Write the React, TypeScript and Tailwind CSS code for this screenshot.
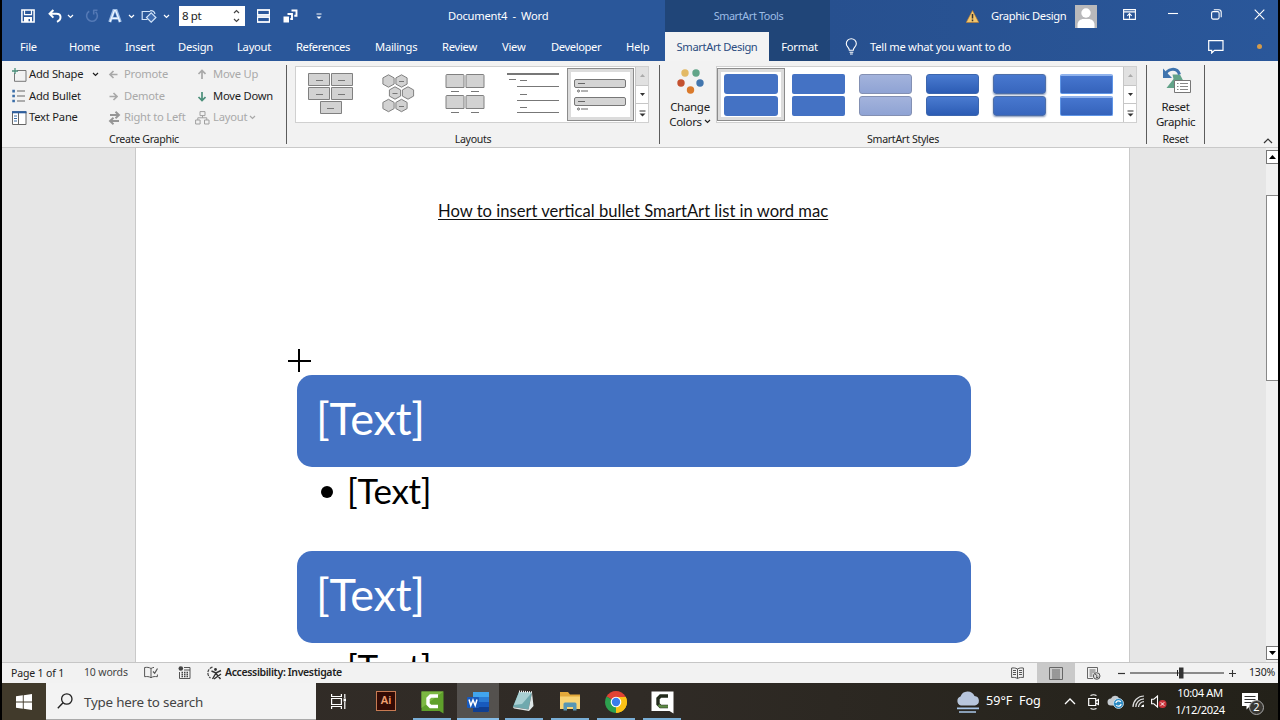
import React from "react";

type IconProps = { w: number; h: number; className?: string; children: React.ReactNode };

function Icon({ w, h, className = "", children }: IconProps) {
  return (
    <svg width={w} height={h} viewBox={`0 0 ${w} ${h}`} fill="none" className={`block shrink-0 ${className}`}>
      {children}
    </svg>
  );
}

function Chevron({ className = "" }: { className?: string }) {
  return (
    <Icon w={7} h={5} className={className}>
      <path d="M1 1l2.5 2.5L6 1" stroke="currentColor" strokeWidth="1.2" />
    </Icon>
  );
}

/* ---------- Title bar ---------- */

function QuickAccess() {
  return (
    <div className="flex h-[32px] items-center pl-[19px] text-white">
      <div className="w-[27px]">
        <Icon w={14} h={14}>
          <path d="M.9.9h12.200v12.200H.9z" stroke="#fff" strokeWidth="1.500" />
          <path d="M3.500 1v4.700h7V1" stroke="#fff" strokeWidth="1.200" />
          <path d="M3 8h8v5H9V10H7.500v3H3z" fill="#fff" />
        </Icon>
      </div>
      <div className="w-[19px]">
        <Icon w={14} h={14}>
          <path d="M5.400 1L1.600 4.800l3.800 3.800M2 4.800h6.500c5 0 5.500 5.700.5 8" stroke="#fff" strokeWidth="2" />
        </Icon>
      </div>
      <div className="w-[18px]"><Chevron /></div>
      <div className="w-[23px]">
        <Icon w={14} h={14}>
          <path d="M4.200 2.200a5.400 5.400 0 1 0 6.400.6M8.300 1.200h4.200M8.700 1v4.500" stroke="#5479b5" strokeWidth="1.600" />
        </Icon>
      </div>
      <div className="w-[20px]">
        <Icon w={14} h={14}>
          <path d="M1.800 13L6 1.200h2L12.200 13" stroke="#9cbce6" strokeWidth="3.200" strokeLinejoin="round" />
          <path d="M4 9.300h6" stroke="#9cbce6" strokeWidth="2.600" />
          <path d="M2 13L6.300 1.600h1.400L12 13M4.200 9.300h5.600" stroke="#f0f7ff" strokeWidth="1.200" />
        </Icon>
      </div>
      <div className="w-[13px]"><Chevron /></div>
      <div className="w-[22px]">
        <Icon w={17} h={14}>
          <path d="M6.500 10.500H1.200V2.500h8M9 1.800a4.500 4.500 0 0 1 5 3.200" stroke="#cfe2f8" strokeWidth="1.200" />
          <path d="M10.200 3.800l4.700 4.700-4.700 4.700-4.700-4.700z" stroke="#cfe2f8" strokeWidth="1.200" fill="#3f6cb0" />
        </Icon>
      </div>
      <div className="w-[16px]"><Chevron /></div>
      <div className="mt-[-1px] flex h-[20px] w-[66px] items-center justify-between bg-white pl-[3px] pr-[5px] text-[11.5px] tracking-[-0.4px] text-[#222]">
        <span>8 pt</span>
        <Icon w={7} h={14}>
          <path d="M1 4l2.500-2.500L6 4M1 10l2.500 2.500L6 10" stroke="#444" strokeWidth="1.200" />
        </Icon>
      </div>
      <div className="w-[26px] pl-[12px]">
        <Icon w={13} h={14}>
          <path d="M.6 1h11.800v4.800H.6zM.6 8.200h11.800V13H.6z" stroke="#fff" strokeWidth="1.200" />
          <path d="M0 1h13M0 6h13M0 8h13M0 13h13" stroke="#fff" strokeWidth="1.400" />
        </Icon>
      </div>
      <div className="w-[44px] pl-[12px]">
        <Icon w={15} h={14}>
          <path d="M.5 7.500H6v6H.5z" fill="#fff" />
          <path d="M4.500 5H9v5H7.300" stroke="#fff" strokeWidth="1.900" />
          <path d="M8.500 1.500h5v5.300h-2.200" stroke="#fff" strokeWidth="1.900" />
        </Icon>
      </div>
      <Icon w={6} h={8} className="ml-[1px]">
        <path d="M.5 2h5" stroke="#fff" />
        <path d="M.5 4.500h5L3 7z" fill="#fff" />
      </Icon>
      <span className="ml-[126px] mt-px whitespace-pre text-[11.2px] tracking-[-0.25px]">Document4  -  Word</span>
    </div>
  );
}

function Tab({ children, className }: { children: React.ReactNode; className: string }) {
  return <div className={`shrink-0 whitespace-nowrap ${className}`}>{children}</div>;
}

function Header() {
  return (
    <header className="flex h-[61px] bg-[#2a579a] text-[11.2px] tracking-[-0.25px] text-white">
      <div className="w-[663px] shrink-0">
        <QuickAccess />
        <nav className="flex h-[29px] items-center pl-[18px] pt-[2px]">
          <Tab className="w-[49px]">File</Tab>
          <Tab className="w-[56px]">Home</Tab>
          <Tab className="w-[53px]">Insert</Tab>
          <Tab className="w-[59px]">Design</Tab>
          <Tab className="w-[59px]">Layout</Tab>
          <Tab className="w-[79px] tracking-[-0.42px]">References</Tab>
          <Tab className="w-[67px]">Mailings</Tab>
          <Tab className="w-[60px]">Review</Tab>
          <Tab className="w-[49px]">View</Tab>
          <Tab className="w-[75px] tracking-[-0.4px]">Developer</Tab>
          <Tab className="w-[30px]">Help</Tab>
        </nav>
      </div>
      <div className="w-[165px] shrink-0 bg-[#204578]">
        <div className="flex h-[32px] items-center justify-center pl-[2px] text-[10.8px] tracking-[-0.36px] text-[#9dbde6]">SmartArt Tools</div>
        <div className="flex h-[29px]">
          <div className="flex w-[104px] items-center justify-center whitespace-nowrap bg-[#f3f3f3] pt-[2px] tracking-[-0.4px] text-[#2b4c80]">SmartArt Design</div>
          <div className="flex w-[61px] items-center justify-center pt-[2px]">Format</div>
        </div>
      </div>
      <div className="flex-1 bg-linear-to-r from-[#27508f] to-[#2a579a]">
        <div className="flex h-[32px] items-center pl-[136px]">
          <Icon w={13} h={13}>
            <path d="M6.500.5L12.800 12.500H.2z" fill="#f3c66c" stroke="#b97b2b" strokeWidth=".6" />
            <path d="M6.500 4v4.500M6.500 9.500v1.700" stroke="#333" strokeWidth="1.500" />
          </Icon>
          <span className="ml-[12px] mt-px w-[84px] whitespace-nowrap tracking-[-0.36px]">Graphic Design</span>
          <Icon w={22} h={23}>
            <path d="M0 0h22v23H0z" fill="#b9b9bb" />
            <circle cx="11" cy="8" r="4.700" fill="#fff" />
            <path d="M2.500 23v-3c0-4 3-6 6-6h5c3 0 6 2 6 6v3z" fill="#fff" />
          </Icon>
          <Icon w={13} h={11} className="ml-[26px] mt-[-3px]">
            <path d="M.6.600h11.800v9.800H.6zM.6 2.900h11.800M6.500 9.500V5M4.300 6.800l2.200-2.200 2.200 2.200" stroke="#fff" strokeWidth="1.100" />
          </Icon>
          <Icon w={10} h={3} className="ml-[32px] mt-[-5px]"><path d="M0 1.500h10" stroke="#fff" strokeWidth="1.100" /></Icon>
          <Icon w={11} h={11} className="ml-[33px] mt-[-3px]">
            <rect x=".6" y="2.600" width="7.500" height="7.500" rx="1.500" stroke="#fff" strokeWidth="1.100" />
            <path d="M2.800.8h5c1.600 0 2.400.9 2.400 2.400v5" stroke="#fff" strokeWidth="1.100" />
          </Icon>
          <Icon w={11} h={11} className="ml-[32px] mt-[-3px]"><path d="M.7.700l9.600 9.600M10.300.700L.7 10.300" stroke="#fff" strokeWidth="1.100" /></Icon>
        </div>
        <div className="flex h-[29px] items-center pl-[15px]">
          <Icon w={13} h={17}>
            <path d="M4.300 12.300C4.300 9.500 1.300 8.800 1.300 5.700a5 5 0 0 1 10 0c0 3.100-3 3.800-3 6.600zM4.500 14.200h3.800M5 16h2.800" stroke="#fff" strokeWidth="1.100" />
          </Icon>
          <span className="ml-[12px] mt-[2px] w-[338px] whitespace-nowrap">Tell me what you want to do</span>
          <Icon w={16} h={14}>
            <path d="M.7.700h14.300v9.600H6.500L3.700 13v-2.700h-3z" stroke="#fff" strokeWidth="1.200" />
          </Icon>
          <span className="ml-[33px] h-[5px] w-[5px] rounded-full bg-[#d39a4a]" />
        </div>
      </div>
    </header>
  );
}

/* ---------- Ribbon ---------- */

function Divider() {
  return <div className="mt-[4px] h-[79px] w-px shrink-0 bg-[#5c5c5c]" />;
}

function GroupLabel({ children }: { children: React.ReactNode }) {
  return <div className="flex h-[14px] items-center justify-center whitespace-nowrap text-[10.6px] tracking-[-0.3px] text-[#222]">{children}</div>;
}

function Arrow({ d, color }: { d: string; color: string }) {
  return (
    <Icon w={11} h={11}>
      <path d={d} stroke={color} strokeWidth="1.700" />
    </Icon>
  );
}

type CommandProps = { icon: React.ReactNode; label: string; off?: boolean; more?: boolean; moreClass?: string; slot?: string };

function Command({ icon, label, off, more, moreClass = "", slot = "w-[17px]" }: CommandProps) {
  return (
    <div className={`flex items-center whitespace-nowrap ${off ? "text-[#a9a9a9]" : "text-[#1e1e1e]"}`}>
      <span className={`flex shrink-0 ${slot}`}>{icon}</span>
      {label}
      {more && <Chevron className={moreClass} />}
    </div>
  );
}

function CreateGraphic() {
  return (
    <div className="flex w-[284px] shrink-0 flex-col justify-between pt-[3px]">
      <div className="grid grid-cols-[95px_88px_1fr] grid-rows-[21.5px_21.5px_21.5px] pl-[10px] text-[11.2px] tracking-[-0.22px]">
        <Command label="Add Shape" more moreClass="ml-[9px]" icon={
          <Icon w={15} h={14}>
            <path d="M5 2.500h9v10.800H2.500V5" stroke="#777" /><path d="M3 0v6M0 3h6" stroke="#4b8f7a" strokeWidth="1.300" />
          </Icon>} />
        <Command off label="Promote" icon={<Arrow color="#a9a9a9" d="M10.500 5.500H3M6.500 2L3 5.500 6.500 9" />} />
        <Command off label="Move Up" slot="w-[18px]" icon={<Arrow color="#a9a9a9" d="M7 10V1.500M3.500 5L7 1.500 10.500 5" />} />
        <Command label="Add Bullet" icon={
          <Icon w={15} h={14}>
            <path d="M5 2h8M5 7h8M5 12h8" stroke="#666" strokeWidth="1.100" />
            <path d="M.3.800h2.600v2.600H.3zM.3 5.700h2.600v2.600H.3zM.3 10.700h2.600v2.600H.3z" fill="#3b6ea8" />
          </Icon>} />
        <Command off label="Demote" icon={<Arrow color="#a9a9a9" d="M2.500 5.500H10M6.500 2L10 5.500 6.500 9" />} />
        <Command label="Move Down" slot="w-[18px]" icon={<Arrow color="#4b8f7a" d="M7 1v8.500M3.500 6L7 9.500 10.500 6" />} />
        <Command label="Text Pane" icon={
          <Icon w={15} h={14}>
            <path d="M.5 1h13.500v12.500H.5zM6.500 2v11.500" stroke="#666" fill="#fff" /><path d="M0 1.200h14.500" stroke="#2f5f9e" strokeWidth="2.200" />
            <path d="M2 5h3M2 7.500h3M2 10h3" stroke="#3b6ea8" />
          </Icon>} />
        <Command off label="Right to Left" icon={
          <Icon w={15} h={14}>
            <path d="M3 4h9M8.500.800L12 4 8.500 7.200M12 10H3M6.500 6.800L3 10l3.500 3.200" stroke="#969696" strokeWidth="1.900" />
          </Icon>} />
        <Command off label="Layout" more moreClass="ml-[2px]" slot="w-[18px]" icon={
          <Icon w={15} h={14}>
            <path d="M5 .6h5v4H5zM.6 9h4.500v4H.6zM9.500 9H14v4H9.500zM7.500 4.600v2.200M2.800 9V6.800h9V9" stroke="#a0a0a0" />
          </Icon>} />
      </div>
      <GroupLabel>Create Graphic</GroupLabel>
    </div>
  );
}

function GalleryButtons() {
  return (
    <div className="flex w-[13px] shrink-0 flex-col border-l border-[#c6c6c6]">
      <div className="flex flex-1 items-center justify-center border-b border-[#c6c6c6] bg-[#e1e1e1]">
        <Icon w={5} h={3}><path d="M0 3h5L2.500 0z" fill="#aaa" /></Icon>
      </div>
      <div className="flex flex-1 items-center justify-center border-b border-[#c6c6c6]">
        <Icon w={5} h={3}><path d="M0 0h5L2.500 3z" fill="#333" /></Icon>
      </div>
      <div className="flex flex-1 items-center justify-center">
        <Icon w={7} h={7}><path d="M.5 1h6" stroke="#333" /><path d="M.5 3.500h6l-3 3z" fill="#333" /></Icon>
      </div>
    </div>
  );
}

const hexagons = [[99, 82, 0], [112, 82, 1], [105.5, 94, 1], [118.5, 94, 0], [99, 106.5, 0], [112, 106.5, 1]];

function Layouts() {
  return (
    <div className="flex w-[372px] shrink-0 flex-col justify-between pt-[5px]">
      <div className="ml-[8px] flex h-[57px] w-[354px] border border-[#d0d0d0] bg-white">
        <Icon w={272} h={55}>
          <g fill="#d2d2d2" stroke="#808080">
            <path d="M12.500 6.500h21v12h-21zM35.500 6.500h21v12h-21zM12.500 20.500h21v12h-21zM35.500 20.500h21v12h-21zM24.500 34.500h21v12h-21z" />
            {hexagons.map(([x, y], i) => (
              <path key={i} transform={`translate(${x - 6.5} ${y - 68})`} d="M0-6.200l5.600 3.100v6.200L0 6.200l-5.600-3.100v-6.200z" />
            ))}
            <path d="M151 7.500h16q1 0 1 1v12h-18v-12q0-1 1-1zM171 7.500h16q1 0 1 1v12h-18v-12q0-1 1-1zM151 28.500h16q1 0 1 1v12h-18v-12q0-1 1-1zM171 28.500h16q1 0 1 1v12h-18v-12q0-1 1-1z" />
          </g>
          <g stroke="#777">
            <path d="M20 13.500h7M42 13.500h7M20 27.500h7M42 27.500h7M31 41.500h7" />
            <path d="M103 14.500h5M96.500 26.500h5M103 39.500h5" />
            <path d="M155 24.500h8M175 24.500h8M155 45.500h8M175 45.500h8" />
            <path d="M213 12.500h7M224 13.500h7M221 19.500h42M224 27.500h7M221 33.500h42M224 40.500h7M221 45.500h42" />
            <path d="M211 7h52" strokeWidth="2" />
          </g>
        </Icon>
        <div className="my-px ml-[-1px] w-[67px] border border-[#8c8c8c] bg-[#dcdcdc] p-[3px]">
          <div className="h-full bg-white">
            <Icon w={59} h={47}>
              <g fill="#d4d4d4" stroke="#777">
                <rect x="3.500" y="7.500" width="51" height="8" rx="1.500" />
                <rect x="3.500" y="25.500" width="51" height="8" rx="1.500" />
              </g>
              <path d="M7 11.500h7M7 29.500h7M10 19h7M10 37h7" stroke="#666" />
              <circle cx="7.500" cy="19" r="1" stroke="#666" /><circle cx="7.500" cy="37" r="1" stroke="#666" />
            </Icon>
          </div>
        </div>
        <div className="ml-auto flex"><GalleryButtons /></div>
      </div>
      <GroupLabel>Layouts</GroupLabel>
    </div>
  );
}

const styleFills = [
  "bg-[#4472c4] rounded-[3px]",
  "bg-[#4472c4] rounded-[2px]",
  "bg-linear-to-b from-[#a3b3dc] to-[#8fa3d4] rounded-[3px] border border-[#8390b3]",
  "bg-linear-to-b from-[#4a7bd0] to-[#2c5cb4] rounded-[3px] border border-[#3c66ae]",
  "bg-linear-to-b from-[#4878cf] to-[#3866bd] rounded-[3px] border border-[#4d6ea8] shadow-[0_1px_2px_#8294b8]",
  "bg-linear-to-b from-[#4676cf] to-[#3563bb] rounded-[2px] border border-[#5f95e6] border-t-2 border-t-[#8fb2ec]",
];

function Styles() {
  return (
    <div className="flex w-[486px] shrink-0 flex-col justify-between pt-[5px] text-[#222]">
      <div className="flex">
        <div className="flex w-[56px] flex-col items-center pl-[4px] text-center text-[11.5px] leading-[15px] tracking-[-0.3px]">
          <Icon w={28} h={26} className="mt-[2px]">
            <circle cx="9" cy="5" r="3.700" fill="#e3b964" />
            <circle cx="20" cy="5" r="3.700" fill="#62a589" />
            <circle cx="5" cy="15" r="3.700" fill="#c4512f" />
            <circle cx="24" cy="15" r="3.700" fill="#4276ae" />
            <circle cx="14.500" cy="22" r="3.700" fill="#da7a2b" />
          </Icon>
          <span className="mt-[5px]">Change</span>
          <span className="flex items-center gap-[2px]">Colors <Chevron /></span>
        </div>
        <div className="flex h-[57px] w-[421px] border border-[#d0d0d0] bg-white">
          {styleFills.map((fill, i) => (
            <div key={i} className={`my-px h-[53px] shrink-0 ${i === 0 ? "w-[68px] border border-[#8c8c8c] bg-[#dcdcdc] p-[3px]" : "w-[67px] border border-transparent p-[3px]"}`}>
              <div className="flex h-full flex-col gap-[2px] bg-white px-[3px] pb-[1px] pt-[2px]">
                <div className={`flex-1 ${fill}`} />
                <div className={`flex-1 ${fill}`} />
              </div>
            </div>
          ))}
          <div className="ml-auto flex"><GalleryButtons /></div>
        </div>
      </div>
      <GroupLabel>SmartArt Styles</GroupLabel>
    </div>
  );
}

function Ribbon() {
  return (
    <section className="flex h-[87px] border-b border-[#c9c9c9] bg-[#f2f2f2]">
      <CreateGraphic />
      <Divider />
      <Layouts />
      <Divider />
      <Styles />
      <Divider />
      <div className="flex w-[57px] shrink-0 flex-col items-center justify-between pt-[5px] text-[#222]">
        <div className="flex flex-col items-center text-[11.5px] leading-[15px] tracking-[-0.4px]">
          <Icon w={30} h={28}>
            <path d="M11.500 8.500h7.500l7 13.500H5.500l3.500-4.500L12.500 13z" fill="#63a389" />
            <path d="M4 9.500C6 2.500 16 .5 18.500 8.500" stroke="#3f74ae" strokeWidth="3" />
            <path d="M2 2.500v9.500h9z" fill="#3f74ae" />
            <path d="M13.500 14.500h16v12h-16z" fill="#fff" stroke="#777" />
            <path d="M16 17.500h1.500M19 17.500h8M16 20.500h1.500M19 20.500h8M16 23.500h1.500M19 23.500h8" stroke="#888" />
          </Icon>
          <span className="mt-[5px]">Reset</span>
          <span>Graphic</span>
        </div>
        <GroupLabel>Reset</GroupLabel>
      </div>
      <Divider />
      <div className="flex flex-1 items-end justify-end pb-[3px] pr-[5px]">
        <Icon w={10} h={6}><path d="M1 5l4-4 4 4" stroke="#333" strokeWidth="1.200" /></Icon>
      </div>
    </section>
  );
}

/* ---------- Document ---------- */

function Block() {
  return (
    <div className="h-[176px]">
      <div className="flex h-[92px] w-[674px] items-center rounded-[15px] bg-[#4472c4] pb-[4px] pl-[19px] text-[45px] tracking-[-0.3px] text-white">[Text]</div>
      <div className="flex h-[50px] items-center pl-[24px] text-[35px] tracking-[-0.3px] text-black">
        <span className="mr-[14px] h-[12px] w-[12px] rounded-full bg-black" />
        <span className="mt-[-4px]">[Text]</span>
      </div>
    </div>
  );
}

function Document() {
  return (
    <main className="flex h-[514px] overflow-hidden bg-[#e6e6e6]">
      <div className="relative ml-[133px] w-[995px] shrink-0 border-x border-[#c9c9c9] bg-white font-['Lato','Liberation_Sans',sans-serif]">
        <h1 className="mt-[52px] pl-[302px] text-[16.6px] leading-[22px] text-[#111] underline decoration-1 underline-offset-2">How to insert vertical bullet SmartArt list in word mac</h1>
        <div className="mt-[153px] pl-[161px]">
          <Block />
          <Block />
        </div>
        <Icon w={23} h={23} className="absolute left-[152px] top-[201px]">
          <path d="M0 12h23M11 0v23" stroke="#000" strokeWidth="2" />
        </Icon>
      </div>
      <div className="ml-auto flex w-[12px] flex-col bg-[#f0f0f0]">
        <div className="mt-[2px] flex h-[14px] items-center justify-center border border-r-0 border-[#777] bg-white">
          <Icon w={7} h={4}><path d="M0 4h7L3.500 0z" fill="#000" /></Icon>
        </div>
        <div className="mt-[31px] h-[186px] border border-r-0 border-[#888] bg-white" />
        <div className="mb-[2px] mt-auto flex h-[14px] items-center justify-center border border-r-0 border-[#777] bg-white">
          <Icon w={7} h={4}><path d="M0 0h7L3.500 4z" fill="#000" /></Icon>
        </div>
      </div>
    </main>
  );
}

/* ---------- Status bar ---------- */

function StatusBar() {
  return (
    <footer className="flex h-[21px] items-center whitespace-nowrap border-t border-[#c6c6c6] bg-[#f2f2f2] text-[10.5px] tracking-[-0.15px] text-[#222]">
      <span className="ml-[9px] mt-px w-[73px]">Page 1 of 1</span>
      <span className="w-[60px] text-[#444]">10 words</span>
      <Icon w={14} h={13} className="mt-[-2px]">
        <path d="M7 2.500C5 1.200 3 1.200.6 1.500v9.200c2.400-.3 4.400-.3 6.400 1V2.500c1-.7 2-1 3-1.100M7 11.700c2-1.300 4-1.300 6.400-1V8.500" stroke="#555" />
        <path d="M9 5.500l1.700 1.700L13.500 2.500" stroke="#555" strokeWidth="1.200" />
      </Icon>
      <Icon w={13} h={13} className="ml-[20px] mt-[-1px]">
        <circle cx="2.800" cy="2.500" r="2.300" fill="#444" />
        <path d="M6 1.500h6v11H1.500V6M6 4h6" stroke="#555" />
        <path d="M3.500 6.500h7M3.500 8.500h7M3.500 10.500h7" stroke="#444" strokeDasharray="1.500 1" strokeWidth="1.300" />
      </Icon>
      <Icon w={15} h={14} className="ml-[16px]">
        <path d="M5.500 1.200A6 6 0 0 0 3.500 12" stroke="#444" strokeDasharray="3 1" strokeWidth="1.200" />
        <path d="M4.500 5l4.500 2 5-2.500M9 7l-3.500 6M9 7.500l4.500 5.500M7 13l7-5" stroke="#333" strokeWidth="1.400" />
        <circle cx="8.500" cy="3.500" r="1.400" fill="#333" />
      </Icon>
      <span className="ml-[3px] font-semibold tracking-[-0.36px]">Accessibility: Investigate</span>
      <div className="ml-auto flex h-full items-center">
        <Icon w={13} h={12}>
          <path d="M6.500 2C4.500.8 2.500.8.6 1v9.500c2-.3 4-.2 5.900 1 1.900-1.200 3.900-1.300 5.900-1V1c-2-.2-4-.2-5.900 1zv9.500" stroke="#555" />
          <path d="M2 3.500h3M2 5.500h3M2 7.500h3M8 3.500h3M8 5.500h3M8 7.500h3" stroke="#555" />
        </Icon>
        <div className="ml-[13px] flex h-full w-[38px] items-center justify-center bg-[#c9c9c9]">
          <Icon w={14} h={13}>
            <path d="M.5.500h13v12H.5zM3 3h8M3 5h8M3 7h8M3 9h8M3 11h8" stroke="#666" />
          </Icon>
        </div>
        <Icon w={14} h={13} className="ml-[12px]">
          <path d="M6 11.500H.5V.500h10V5M2.500 3h6M2.500 5h6M2.500 7h3M2.500 9h3" stroke="#666" />
          <circle cx="9.700" cy="9" r="3.300" fill="#ddd" stroke="#555" /><path d="M8 7l2 1.500-.5 2.500 2-1" stroke="#555" />
        </Icon>
        <Icon w={7} h={3} className="ml-[17px]"><path d="M0 1.500h7" stroke="#333" strokeWidth="1.200" /></Icon>
        <Icon w={94} h={12} className="ml-[5px]">
          <path d="M0 6h94" stroke="#222" strokeWidth="1.200" /><path d="M47.500 3v6" stroke="#222" /><path d="M49 .5h4.500v11H49z" fill="#333" />
        </Icon>
        <Icon w={7} h={7} className="ml-[5px]"><path d="M0 3.500h7M3.500 0v7" stroke="#333" strokeWidth="1.100" /></Icon>
        <span className="ml-[13px] w-[29px]">130%</span>
      </div>
    </footer>
  );
}

/* ---------- Taskbar ---------- */

function Camtasia({ light }: { light?: boolean }) {
  return (
    <Icon w={23} h={23} className="mt-[3px]">
      <path d="M.5.500h22v22l-4-2.500H.5z" fill={light ? "#fff" : "#5fa02b"} />
      {!light && <path d="M.5.500h22L.5 17z" fill="#7cb843" />}
      <path d="M17 5H9.500L7 7.500v5.500L9.500 15.500H17" stroke={light ? "#232b1c" : "#fff"} strokeWidth="3.400" />
      {light && <path d="M7.500 14l2 1.500H17" stroke="#5d8a45" strokeWidth="2.400" />}
    </Icon>
  );
}

function TaskApp({ children, active, idle }: { children: React.ReactNode; active?: boolean; idle?: boolean }) {
  return (
    <div className={`flex w-[46px] flex-col items-center justify-between ${active ? "bg-linear-to-r from-[#54514e] to-[#54514e] bg-[length:42px_100%] bg-center bg-no-repeat" : ""}`}>
      <div className="flex flex-1 items-center">{children}</div>
      <div className={`h-[2px] ${idle ? "w-0" : active ? "w-[42px] bg-[#86bde8]" : "w-[38px] bg-[#79aed6]"}`} />
    </div>
  );
}

function Taskbar() {
  return (
    <div className="flex h-[37px] bg-linear-to-r from-[#322c27] via-[#302b26] to-[#232119] text-white">
      <div className="flex w-[44px] items-center justify-center bg-[#413a2b]">
        <Icon w={16} h={16}><path d="M0 2.300L6.800 1.300v6.200H0zM7.700 1.200L16 0v7.500H7.700zM0 8.400h6.800v6.300L0 13.700zM7.700 8.400H16V16l-8.300-1.200z" fill="#fff" /></Icon>
      </div>
      <div className="flex w-[270px] items-center border-b border-[#aaa] bg-[#f3f3f3] pl-[11px] text-[13.4px] tracking-[-0.22px] text-[#444]">
        <Icon w={16} h={16}><circle cx="9.800" cy="6" r="5.200" stroke="#222" strokeWidth="1.300" /><path d="M6 9.800L.8 15.200" stroke="#222" strokeWidth="1.400" /></Icon>
        <span className="ml-[11px] mt-[2px] whitespace-nowrap">Type here to search</span>
      </div>
      <div className="flex w-[47px] items-center pl-[15px]">
        <Icon w={16} h={15}>
          <path d="M.6 0v2.500h9.800V0M.6 4.500h9.800v6H.6zM.6 15v-2.500h9.800V15M13.800 0v4M13.800 8v7" stroke="#fff" strokeWidth="1.200" />
          <path d="M12.500 4.500H15v3h-2.500z" fill="#fff" />
        </Icon>
      </div>
      <TaskApp idle>
        <div className="flex h-[20px] w-[20px] items-center justify-center border border-[#c87a52] bg-[#330b05] text-[11px] font-semibold text-[#f0a070]">Ai</div>
      </TaskApp>
      <TaskApp><Camtasia /></TaskApp>
      <TaskApp active>
        <Icon w={23} h={22} className="mt-[2px]">
          <rect x="6" y="1" width="16" height="20" rx="1.500" fill="#2b7cd3" />
          <path d="M6 1h16v5H6z" fill="#41a5ee" /><path d="M6 11h16v5H6z" fill="#185abd" /><path d="M6 16h16v3.500q0 1.500-1.500 1.500H6z" fill="#103f91" />
          <rect x="0" y="6" width="12" height="11" rx="1" fill="#185abd" />
          <path d="M2 8.500l1.800 6L6 9l2.200 5.500 1.800-6" stroke="#fff" strokeWidth="1.500" />
        </Icon>
      </TaskApp>
      <TaskApp>
        <Icon w={22} h={22} className="mr-[3px]">
          <path d="M7 2l13 .5-3.500 17L.8 17z" fill="#6fa9ae" /><path d="M7 2l13 .5L10 14l-8 1z" fill="#a9d0d3" />
          <path d="M.8 17l15.700 2.500L20 2.500l1.500 13.500-4.500 5L2 18.500z" fill="#dfe7e8" /><path d="M7 1.500l13 .8" stroke="#eee" strokeDasharray="1 1" strokeWidth="2" />
        </Icon>
      </TaskApp>
      <TaskApp>
        <Icon w={22} h={20} className="mr-[1px] mt-[1px]">
          <path d="M1 1h8l2 2.500h10V18H1z" fill="#e3a93a" /><path d="M1 5.500h20V18H1z" fill="#f8d373" />
          <path d="M4.500 19.500v-6.500q0-1.500 1.500-1.500h10q1.500 0 1.500 1.500v6.500H14v-3.500H8v3.500z" fill="#5796b3" />
        </Icon>
      </TaskApp>
      <TaskApp>
        <Icon w={22} h={22} className="mt-[2px]">
          <path d="M11 11L1.500 5.500A11 11 0 0 1 20.500 5.500z" fill="#e04334" /><path d="M11 11l9.500-5.500A11 11 0 0 1 11 22z" fill="#fbc116" />
          <path d="M11 11L11 22A11 11 0 0 1 1.500 5.500z" fill="#2da04e" /><path d="M11 6h9.800A11 11 0 0 1 11 22l4.500-8.500z" fill="#fbc116" />
          <circle cx="11" cy="11" r="5.300" fill="#fff" /><circle cx="11" cy="11" r="4.200" fill="#3b7ded" />
        </Icon>
      </TaskApp>
      <TaskApp><Camtasia light /></TaskApp>
      <div className="ml-auto flex items-center">
        <Icon w={24} h={22}>
          <path d="M5 14.500a4.700 4.700 0 0 1-.5-9A7.500 7.500 0 0 1 18.500 5a4.800 4.800 0 0 1 .5 9.500z" fill="#b8c6dc" />
          <path d="M1 17.300h22M3 21h17" stroke="#a9c6e8" strokeWidth="1.700" />
        </Icon>
        <span className="ml-[6px] w-[78px] whitespace-pre text-[12.6px]">59°F  Fog</span>
        <Icon w={12} h={7}><path d="M1 6l5-5 5 5" stroke="#fff" strokeWidth="1.300" /></Icon>
        <Icon w={11} h={16} className="ml-[12px]">
          <path d="M2.500 1.500q3-1.500 6 0M2.500 14.500q3 1.500 6 0M.7 4.500h7v7h-7zM7.700 7.200l2.700-1.700v5L7.700 9" stroke="#fff" strokeWidth="1.200" />
        </Icon>
        <Icon w={17} h={15} className="ml-[8px]">
          <path d="M4 11.500a3.500 3.500 0 0 1 0-7A4.500 4.500 0 0 1 12 4l2 4-4 3.500z" fill="#c6cbd0" />
          <circle cx="11.500" cy="9.500" r="5" fill="#2a8ac4" stroke="#d6e9f5" strokeWidth=".8" />
          <path d="M8.800 9a2.800 2.800 0 0 1 5-1M14.200 10a2.800 2.800 0 0 1-5 1" stroke="#fff" strokeWidth="1.200" />
        </Icon>
        <Icon w={13} h={13} className="ml-[8px]">
          <path d="M1 12A11 11 0 0 1 12 1M3.800 12A8.200 8.200 0 0 1 12 3.900M6.500 12A5.500 5.500 0 0 1 12 6.700" stroke="#ddd" strokeWidth="1.200" />
          <path d="M9 12a3 3 0 0 1 3-2.500V12z" fill="#fff" />
        </Icon>
        <Icon w={16} h={14} className="ml-[6px]">
          <path d="M.6 4.200h2.200L6.500 1v11L2.800 8.800H.6z" stroke="#fff" strokeWidth="1.100" />
          <circle cx="11.500" cy="9" r="4" fill="#c9333b" /><path d="M9.800 7.300l3.400 3.400M13.200 7.300l-3.400 3.400" stroke="#fff" />
        </Icon>
        <div className="ml-[5px] mt-[-2px] flex w-[56px] flex-col items-center whitespace-nowrap text-[11.2px] leading-[17px] tracking-[-0.4px]">
          <span>10:04 AM</span>
          <span>1/12/2024</span>
        </div>
        <div className="ml-[14px] w-[36px]">
          <Icon w={24} h={24} className="mt-[4px]">
            <path d="M0 1h16v13H8l-3.500 3.500V14H0z" fill="#fff" />
            <path d="M2.500 4.500h11M2.500 7.500h11M2.500 10.500h8" stroke="#333" strokeWidth="1.100" />
            <circle cx="14.500" cy="15.500" r="7" fill="#3a3833" stroke="#aaa" />
            <text x="14.500" y="19.300" textAnchor="middle" fill="#fff" fontSize="11" fontFamily="Noto Sans">2</text>
          </Icon>
        </div>
      </div>
    </div>
  );
}

export default function App() {
  return (
    <div className="h-[720px] w-[1280px] overflow-hidden border-x-2 border-black bg-white font-['Noto_Sans','Open_Sans',sans-serif]">
      <Header />
      <Ribbon />
      <Document />
      <StatusBar />
      <Taskbar />
    </div>
  );
}
